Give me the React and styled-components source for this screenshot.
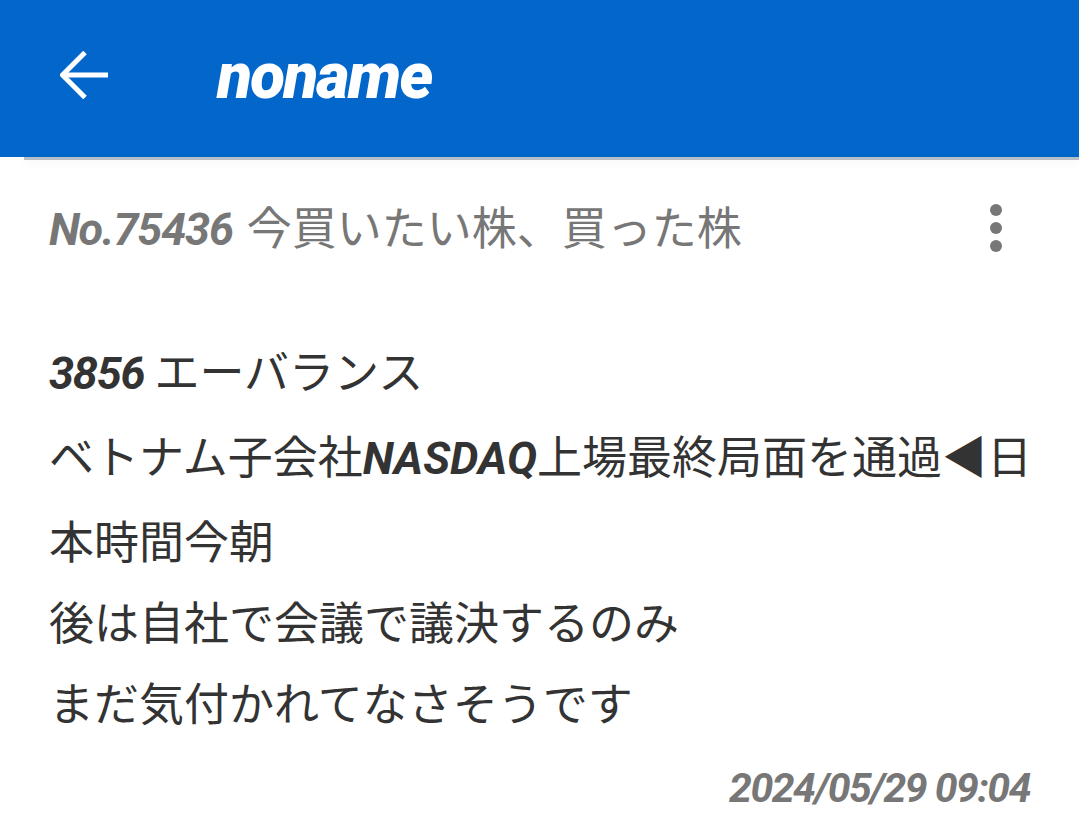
import styled, { createGlobalStyle } from "styled-components"

const GlobalStyle = createGlobalStyle`
    html, body {
        margin: 0;
        padding: 0;
        background: #ffffff;
        font-family: "Noto Sans CJK JP", "Noto Sans", sans-serif;
    }
`

const lines = [
    [{ num: "3856" }, { text: " エーバランス" }],
    [{ text: "ベトナム子会社" }, { num: "NASDAQ", wide: true }, { text: "上場最終局面を通過◀日" }],
    [{ text: "本時間今朝" }],
    [{ text: "後は自社で会議で議決するのみ" }],
    [{ text: "まだ気付かれてなさそうです" }],
]

export default function App() {
    return (
        <>
            <GlobalStyle />
            <Page>
                <Header>
                    <BackButton aria-label="back">
                        <svg width="48" height="48" viewBox="0 0 48 48" fill="none" stroke="#fff" strokeWidth="5">
                            <path d="M2 24H48" />
                            <path d="M25 1.5L2.5 24L25 46.5" />
                        </svg>
                    </BackButton>
                    <Brand>noname</Brand>
                </Header>
                <Divider />
                <Card>
                    <TitleRow>
                        <Title>
                            <Num>No.75436</Num> 今買いたい株、買った株
                        </Title>
                        <MenuButton aria-label="menu">
                            <Dot />
                            <Dot />
                            <Dot />
                        </MenuButton>
                    </TitleRow>
                    <Body>
                        {lines.map((parts, i) => (
                            <Line key={i}>
                                {parts.map((p, j) => p.num ? <Num key={j} $wide={p.wide}>{p.num}</Num> : <span key={j}>{p.text}</span>)}
                            </Line>
                        ))}
                    </Body>
                    <Stamp>2024/05/29 09:04</Stamp>
                </Card>
            </Page>
        </>
    )
}

const Page = styled.div`
    width: 1079px;
    min-height: 833px;
    background: #ffffff;
`

const Header = styled.header`
    display: flex;
    align-items: center;
    gap: 109px;
    height: 157px;
    padding-left: 60px;
    box-sizing: border-box;
    background-color: #0266ca;
`

const BackButton = styled.div`
    display: flex;
    width: 48px;
    height: 48px;
    margin-top: -8px;
`

const Brand = styled.h1`
    margin: 0;
    margin-top: -4px;
    font-family: "Roboto", sans-serif;
    font-weight: 900;
    font-style: italic;
    font-size: 64px;
    letter-spacing: -1.8px;
    color: #ffffff;
`

const Divider = styled.div`
    height: 3px;
    margin-left: 24px;
    background: #b7bec7;
    box-shadow: 0 3px 10px rgba(0, 0, 0, 0.07);
`

const Card = styled.main`
    padding: 38px 49px 0 49px;
`

const TitleRow = styled.div`
    display: flex;
    align-items: center;
    justify-content: space-between;
    height: 60px;
`

const Title = styled.h2`
    margin: 0;
    font-weight: 400;
    font-size: 45px;
    line-height: 60px;
    color: #777777;
    white-space: nowrap;
    word-spacing: 4px;
`

const Num = styled.span`
    font-family: "Roboto", sans-serif;
    font-weight: 700;
    font-style: italic;
    letter-spacing: ${(p) => (p.$wide ? "0" : "-1.2px")};
`

const MenuButton = styled.div`
    display: flex;
    flex-direction: column;
    align-items: center;
    gap: 6px;
    width: 12px;
    margin-right: 28px;
`

const Dot = styled.span`
    width: 12px;
    height: 12px;
    border-radius: 50%;
    background: #777777;
`

const Body = styled.div`
    margin-top: 71px;
    color: #333333;
    font-size: 45px;
    line-height: 81px;
`

const Line = styled.div`
    white-space: nowrap;
`

const Stamp = styled.div`
    margin-top: 21px;
    text-align: right;
    font-family: "Roboto", sans-serif;
    font-weight: 700;
    font-style: italic;
    font-size: 41px;
    line-height: 50px;
    letter-spacing: -1.5px;
    color: #777777;
`
